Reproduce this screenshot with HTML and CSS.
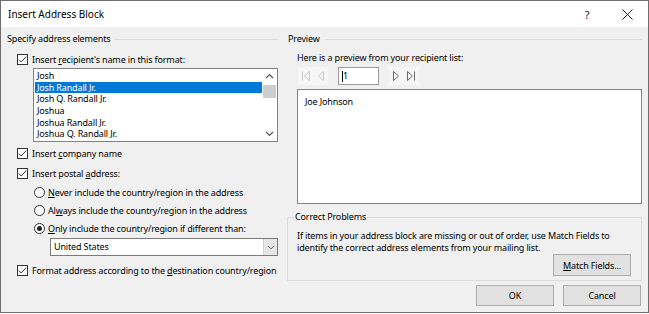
FILE: index.html
```html
<!DOCTYPE html>
<html lang="en">
<head>
<meta charset="utf-8">
<title>Insert Address Block</title>
<link rel="stylesheet" href="styles.css">
</head>
<body>
<div class="window">
  <div class="titlebar">
    <span class="title">Insert Address Block</span>
    <span class="tb-btn help">?</span>
    <span class="tb-btn close">
      <svg width="11" height="11" viewBox="0 0 11 11"><path d="M0.5 0.5 L10.5 10.5 M10.5 0.5 L0.5 10.5" stroke="#222" stroke-width="1" fill="none"/></svg>
    </span>
  </div>
  <div class="content">
    <section class="left">
      <div class="ghead"><span>Specify address elements</span><i class="rule"></i></div>

      <div class="cb-row first">
        <span class="cb"><svg width="11" height="11" viewBox="0 0 11 11"><polyline points="1.8,5.6 4.2,8 9.2,2.6" fill="none" stroke="#333" stroke-width="1"/></svg></span>
        <span>Insert <u>r</u>ecipient's name in this format:</span>
      </div>

      <div class="listbox">
        <ul class="items">
          <li>Josh</li>
          <li class="sel">Josh Randall Jr.</li>
          <li>Josh Q. Randall Jr.</li>
          <li>Joshua</li>
          <li>Joshua Randall Jr.</li>
          <li>Joshua Q. Randall Jr.</li>
        </ul>
        <div class="scrollbar">
          <div class="sb-btn"><svg width="15" height="15" viewBox="0 0 15 15"><polyline points="4,9 7.5,5.5 11,9" fill="none" stroke="#555" stroke-width="1.2"/></svg></div>
          <div class="sb-thumb"></div>
          <div class="sb-track"></div>
          <div class="sb-btn"><svg width="15" height="15" viewBox="0 0 15 15"><polyline points="4,6 7.5,9.5 11,6" fill="none" stroke="#555" stroke-width="1.2"/></svg></div>
        </div>
      </div>

      <div class="cb-row company">
        <span class="cb"><svg width="11" height="11" viewBox="0 0 11 11"><polyline points="1.8,5.6 4.2,8 9.2,2.6" fill="none" stroke="#333" stroke-width="1"/></svg></span>
        <span>Insert <u>c</u>ompany name</span>
      </div>

      <div class="cb-row postal">
        <span class="cb"><svg width="11" height="11" viewBox="0 0 11 11"><polyline points="1.8,5.6 4.2,8 9.2,2.6" fill="none" stroke="#333" stroke-width="1"/></svg></span>
        <span>Insert postal <u>a</u>ddress:</span>
      </div>

      <div class="radios">
        <div class="radio-row"><span class="radio"></span><span><u>N</u>ever include the country/region in the address</span></div>
        <div class="radio-row"><span class="radio"></span><span>Al<u>w</u>ays include the country/region in the address</span></div>
        <div class="radio-row"><span class="radio on"></span><span><u>O</u>nly include the country/region if different than:</span></div>
      </div>

      <div class="select">
        <span class="select-value">United States</span>
        <span class="select-btn"><svg width="14" height="16" viewBox="0 0 14 16"><polyline points="4,7 7,10 10,7" fill="none" stroke="#777" stroke-width="1"/></svg></span>
      </div>

      <div class="cb-row format">
        <span class="cb"><svg width="11" height="11" viewBox="0 0 11 11"><polyline points="1.8,5.6 4.2,8 9.2,2.6" fill="none" stroke="#333" stroke-width="1"/></svg></span>
        <span>Format address according to the <u>d</u>estination country/region</span>
      </div>
    </section>

    <section class="right">
      <div class="ghead preview-head"><span>Preview</span><i class="rule"></i></div>
      <p class="hint">Here is a preview from your recipient list:</p>
      <div class="nav">
        <span class="nav-btn"><svg width="15" height="18" viewBox="0 0 15 18"><path d="M4.5 4.5 V13.5" stroke="#c9c9c9" fill="none"/><polygon points="11.5,4.5 6.5,9 11.5,13.5" fill="none" stroke="#c9c9c9"/></svg></span>
        <span class="nav-btn"><svg width="15" height="18" viewBox="0 0 15 18"><polygon points="10.5,4.5 5.5,9 10.5,13.5" fill="none" stroke="#c9c9c9"/></svg></span>
        <span class="nav-input"><i class="caret"></i>1</span>
        <span class="nav-btn"><svg width="15" height="18" viewBox="0 0 15 18"><polygon points="4.5,4.5 9.5,9 4.5,13.5" fill="none" stroke="#6b6b6b"/></svg></span>
        <span class="nav-btn"><svg width="15" height="18" viewBox="0 0 15 18"><polygon points="3.5,4.5 8.5,9 3.5,13.5" fill="none" stroke="#6b6b6b"/><path d="M10.5 4.5 V13.5" stroke="#6b6b6b" fill="none"/></svg></span>
      </div>
      <div class="preview-box">Joe Johnson</div>

      <fieldset class="problems">
        <legend>Correct Problems</legend>
        <p class="problems-text">If items in your address block are missing or out of order, use Match Fields to identify the correct address elements from your mailing list.</p>
        <div class="problems-actions"><button class="btn"><u>M</u>atch Fields...</button></div>
      </fieldset>

      <div class="actions">
        <button class="btn">OK</button>
        <button class="btn">Cancel</button>
      </div>
    </section>
  </div>
</div>
</body>
</html>
```

FILE: styles.css
```css
* { box-sizing: border-box; }

body {
  margin: 0;
  font-family: "Noto Sans", "Open Sans", sans-serif;
  font-size: 9px;
  letter-spacing: -0.15px;
  color: #000;
  background: #fff;
}

u { text-decoration: underline; text-underline-offset: 1px; }

.window {
  width: 649px;
  height: 313px;
  border: 1px solid #6e6e6e;
  background: #f0f0f0;
  display: flex;
  flex-direction: column;
}

.titlebar {
  height: 26px;
  background: #fff;
  display: flex;
  align-items: center;
  padding-left: 7px;
}
.title { flex: 1; font-size: 10px; letter-spacing: 0; }
.tb-btn {
  display: flex;
  align-items: center;
  justify-content: center;
  height: 26px;
}
.help { width: 40px; font-size: 11px; color: #222; }
.close { width: 41px; }

.content {
  flex: 1;
  display: grid;
  grid-template-columns: 272px 355px;
  column-gap: 8px;
  padding: 5px 6px 0 6px;
  align-items: start;
}

.left, .right { display: flex; flex-direction: column; }

.ghead {
  display: flex;
  align-items: center;
  height: 14px;
  line-height: 14px;
  white-space: nowrap;
}
.ghead .rule { flex: 1; border-top: 1px solid #dcdcdc; margin-left: 5px; }
.preview-head { padding-left: 1px; }

.cb-row {
  display: flex;
  align-items: center;
  gap: 4px;
  height: 14px;
  margin-left: 10px;
  white-space: nowrap;
}
.cb-row.first { margin-top: 6px; }
.cb-row.company { margin-top: 4px; }
.cb-row.postal { margin-top: 6px; }
.cb-row.format { margin-top: 7px; }

.cb {
  width: 11px;
  height: 11px;
  border: 1px solid #333;
  background: #fff;
  display: flex;
  align-items: center;
  justify-content: center;
  flex: none;
}
.cb svg { display: block; flex: none; }

.listbox {
  margin: 2px 0 0 26px;
  width: 245px;
  height: 74px;
  border: 1px solid #828282;
  background: #fff;
  display: flex;
}
.items {
  list-style: none;
  margin: 0;
  padding: 1px 0 0 1px;
  flex: 1;
  overflow: hidden;
}
.items li {
  height: 11.7px;
  line-height: 11.7px;
  padding-left: 2px;
  white-space: nowrap;
}
.items li.sel { background: #0078d7; color: #fff; }

.scrollbar {
  width: 15px;
  display: flex;
  flex-direction: column;
  background: #fff;
}
.sb-btn { height: 15px; }
.sb-btn svg { display: block; }
.sb-thumb {
  margin: 1px 0 0 1px;
  width: 13px;
  height: 13px;
  background: #cdcdcd;
}
.sb-track { flex: 1; }

.radios { margin: 3px 0 0 27px; display: flex; flex-direction: column; }
.radio-row {
  display: flex;
  align-items: center;
  gap: 3px;
  height: 18px;
  white-space: nowrap;
}
.radio {
  width: 11px;
  height: 11px;
  border: 1px solid #333;
  border-radius: 50%;
  background: #fff;
  flex: none;
  display: flex;
  align-items: center;
  justify-content: center;
}
.radio.on::after {
  content: "";
  width: 5px;
  height: 5px;
  border-radius: 50%;
  background: #222;
}

.select {
  margin: 1px 0 0 43px;
  width: 228px;
  height: 18px;
  border: 1px solid #7a7a7a;
  background: #fff;
  display: flex;
  align-items: stretch;
}
.select-value { flex: 1; padding-left: 3px; line-height: 16px; }
.select-btn {
  width: 14px;
  background: #e6e6e6;
  border-left: 1px solid #d0d0d0;
}
.select-btn svg { display: block; }

.hint {
  margin: 5px 0 0 10px;
  line-height: 14px;
}

.nav {
  margin: 2px 0 0 11px;
  height: 18px;
  display: flex;
}
.nav-btn {
  width: 15px;
  height: 18px;
  background: #f6f6f6;
}
.nav-btn svg { display: block; }
.nav-input {
  margin: 0 10px 0 10px;
  width: 41px;
  height: 18px;
  border: 1px solid #9c9c9c;
  background: #fff;
  line-height: 16px;
  padding-left: 3px;
  display: flex;
  align-items: center;
}
.caret {
  width: 1px;
  height: 11px;
  background: #000;
}

.preview-box {
  margin: 4px 0 0 10px;
  width: 345px;
  height: 115px;
  border: 1px solid #848484;
  background: #fff;
  padding: 5px 0 0 7px;
  line-height: 14px;
}

.problems {
  margin: 6px 0 0 0;
  padding: 6px 10px 4px 9px;
  border: 1px solid #dcdcdc;
  min-width: 0;
}
.problems legend {
  padding: 0 1px;
  margin-left: -3px;
  line-height: 14px;
}
.problems-text {
  margin: 0;
  line-height: 11.5px;
}
.problems-actions {
  display: flex;
  justify-content: flex-end;
  margin-top: 1px;
}

.btn {
  font: inherit;
  letter-spacing: inherit;
  color: #000;
  width: 78px;
  height: 22px;
  background: #e1e1e1;
  border: 1px solid #adadad;
  padding: 0;
}

.actions {
  display: flex;
  justify-content: flex-end;
  gap: 9px;
  margin-top: 4px;
  padding-right: 1px;
}
.actions .btn { height: 21px; }
```
